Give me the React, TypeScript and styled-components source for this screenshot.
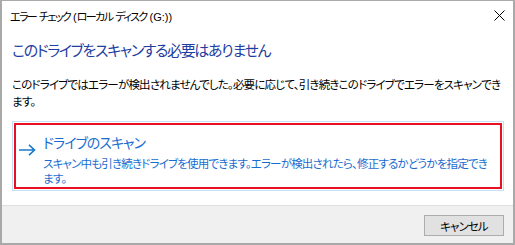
import React from 'react'
import styled, { createGlobalStyle } from 'styled-components'

const GlobalStyle = createGlobalStyle`
  html, body {
    margin: 0;
    padding: 0;
    background: #ffffff;
  }
  body {
    font-family: "Noto Sans CJK JP", "Noto Sans", sans-serif;
    font-feature-settings: "palt";
    color: #000000;
  }
`

const Window = styled.div`
  box-sizing: border-box;
  width: 515px;
  height: 245px;
  display: flex;
  flex-direction: column;
  border: 2px solid #a9a9a9;
  border-top-width: 1px;
  background: #ffffff;
`

const TitleBar = styled.div`
  height: 29px;
  display: flex;
  align-items: center;
  justify-content: space-between;
  padding: 0 8px 0 8px;
  font-size: 11px;
  letter-spacing: -1.6px;
  word-spacing: 2px;
`

const Latin = styled.span`
  letter-spacing: 0;
  font-family: "Liberation Sans", sans-serif;
`

const CloseButton = styled.div`
  width: 12px;
  height: 12px;
  display: flex;
  align-items: center;
  justify-content: center;
`

const Content = styled.div`
  flex: 1;
  display: flex;
  flex-direction: column;
  padding: 0 9px 0 10px;
`

const Heading = styled.div`
  margin-top: 9px;
  font-size: 15px;
  line-height: 22px;
  letter-spacing: -1.35px;
  color: #1e3ea1;
`

const Message = styled.div`
  margin-top: 15px;
  font-size: 11.5px;
  line-height: 17px;
  letter-spacing: -0.8px;
`

const CommandLink = styled.div`
  margin-top: 11px;
  height: 70px;
  box-sizing: border-box;
  border: 1px solid #c5e0f5;
  padding: 1px;
`

const Highlight = styled.div`
  box-sizing: border-box;
  height: 100%;
  border: 2px solid #e81123;
  display: flex;
  gap: 7px;
  padding: 6px 4px 0 3px;
`

const Arrow = styled.div`
  width: 17px;
  padding-top: 6px;
`

const LinkBody = styled.div`
  flex: 1;
  display: flex;
  flex-direction: column;
  color: #1a6dd0;
`

const LinkTitle = styled.div`
  font-size: 14px;
  line-height: 22px;
  letter-spacing: -1px;
`

const LinkNote = styled.div`
  margin-top: 3px;
  font-size: 11.5px;
  line-height: 15px;
  letter-spacing: -0.8px;
`

const Footer = styled.div`
  height: 38px;
  box-sizing: border-box;
  border-top: 1px solid #dfdfdf;
  background: #f0f0f0;
  display: flex;
  justify-content: flex-end;
  align-items: flex-start;
  padding: 9px 9px 0 0;
`

const Button = styled.div`
  box-sizing: border-box;
  width: 80px;
  height: 21px;
  border: 1px solid #adadad;
  background: #e1e1e1;
  display: flex;
  align-items: center;
  justify-content: center;
  font-size: 11.5px;
  letter-spacing: -0.9px;
`

export default function App() {
  return (
    <>
      <GlobalStyle />
      <Window>
        <TitleBar>
          <span>
            エラー チェック <Latin>(</Latin>ローカル ディスク <Latin>(G:))</Latin>
          </span>
          <CloseButton>
            <svg width="11" height="11" viewBox="0 0 11 11">
              <path d="M0.5 0.5 L10.5 10.5 M10.5 0.5 L0.5 10.5" stroke="#000" strokeWidth="1" fill="none" />
            </svg>
          </CloseButton>
        </TitleBar>
        <Content>
          <Heading>このドライブをスキャンする必要はありません</Heading>
          <Message>
            このドライブではエラーが検出されませんでした。必要に応じて、引き続きこのドライブでエラーをスキャンできます。
          </Message>
          <CommandLink>
            <Highlight>
              <Arrow>
                <svg width="17" height="12" viewBox="0 0 17 12">
                  <path d="M0 6 H15.5 M10 0.8 L15.5 6 L10 11.2" stroke="#1979cf" strokeWidth="1.6" fill="none" />
                </svg>
              </Arrow>
              <LinkBody>
                <LinkTitle>ドライブのスキャン</LinkTitle>
                <LinkNote>
                  スキャン中も引き続きドライブを使用できます。エラーが検出されたら、修正するかどうかを指定できます。
                </LinkNote>
              </LinkBody>
            </Highlight>
          </CommandLink>
        </Content>
        <Footer>
          <Button>キャンセル</Button>
        </Footer>
      </Window>
    </>
  )
}
